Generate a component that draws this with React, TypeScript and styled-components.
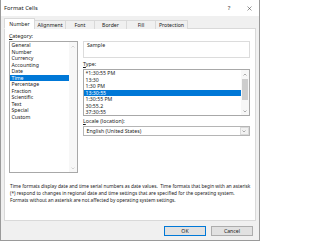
import styled, { createGlobalStyle } from "styled-components";

const GlobalStyle = createGlobalStyle`
  html, body {
    margin: 0;
    padding: 0;
    background: #ffffff;
  }
  body {
    font-family: "Noto Sans", "Liberation Sans", sans-serif;
  }
`;

const categories = [
  "General",
  "Number",
  "Currency",
  "Accounting",
  "Date",
  "Time",
  "Percentage",
  "Fraction",
  "Scientific",
  "Text",
  "Special",
  "Custom",
];

const types = [
  "*1:30:55 PM",
  "13:30",
  "1:30 PM",
  "13:30:55",
  "1:30:55 PM",
  "30:55.2",
  "37:30:55",
];

const tabs = ["Number", "Alignment", "Font", "Border", "Fill", "Protection"];
const tabWidths = [31, 32, 30, 33, 30, 33];

const Window = styled.div`
  width: 260px;
  height: 241px;
  box-sizing: border-box;
  border: 1px solid #9a9a9a;
  border-top: none;
  background: #f0f0f0;
  display: flex;
  flex-direction: column;
  font-size: 5.4px;
  color: #1a1a1a;
  overflow: hidden;
`;

const TitleBar = styled.div`
  height: 16px;
  flex: none;
  background: #ffffff;
  display: flex;
  align-items: center;
  padding-left: 3px;
`;

const Title = styled.span`
  font-size: 5.8px;
  flex: 1;
`;

const TitleButton = styled.div`
  width: 20px;
  height: 16px;
  display: flex;
  align-items: center;
  justify-content: center;
  font-size: 6px;
  color: #333;
`;

const Body = styled.div`
  flex: 1;
  display: flex;
  flex-direction: column;
  padding: 2px 3px 0 3px;
`;

const TabRow = styled.div`
  height: 11px;
  display: flex;
  align-items: flex-end;
  position: relative;
  z-index: 1;
  margin-bottom: -1px;
`;

const Tab = styled.div<{ $active?: boolean; $w: number }>`
  box-sizing: border-box;
  width: ${(p) => p.$w}px;
  height: ${(p) => (p.$active ? 11 : 9)}px;
  margin-left: -1px;
  border: 1px solid #d9d9d9;
  border-bottom: ${(p) => (p.$active ? "1px solid #ffffff" : "none")};
  background: ${(p) => (p.$active ? "#ffffff" : "#f0f0f0")};
  display: flex;
  align-items: center;
  justify-content: center;
  font-size: 5.2px;
  &:first-child {
    margin-left: 0;
  }
`;

const Panel = styled.div`
  box-sizing: border-box;
  width: 252px;
  height: 193px;
  background: #ffffff;
  border: 1px solid #d9d9d9;
  padding: 3px 4px 0 4px;
  display: flex;
  flex-direction: column;
`;

const TopRow = styled.div`
  display: flex;
  gap: 5px;
`;

const LeftColumn = styled.div`
  width: 69px;
  display: flex;
  flex-direction: column;
`;

const RightColumn = styled.div`
  width: 167px;
  display: flex;
  flex-direction: column;
`;

const Label = styled.div<{ $mt?: number }>`
  height: 9px;
  line-height: 9px;
  margin-top: ${(p) => p.$mt ?? 0}px;
  font-size: 5.3px;
  white-space: nowrap;
  & u {
    text-decoration-thickness: 0.5px;
  }
`;

const ListBox = styled.div<{ $h: number }>`
  box-sizing: border-box;
  height: ${(p) => p.$h}px;
  border: 1px solid #a8a8a8;
  background: #ffffff;
  display: flex;
`;

const Items = styled.div`
  flex: 1;
  overflow: hidden;
`;

const Item = styled.div<{ $selected?: boolean }>`
  height: 6.5px;
  line-height: 6.5px;
  padding-left: 1.5px;
  font-size: 5.2px;
  white-space: nowrap;
  background: ${(p) => (p.$selected ? "#0078d7" : "transparent")};
  color: ${(p) => (p.$selected ? "#ffffff" : "#1a1a1a")};
`;

const ScrollBar = styled.div`
  width: 8px;
  background: #f7f7f7;
  display: flex;
  flex-direction: column;
  align-items: center;
`;

const ScrollArrow = styled.div`
  height: 8px;
  width: 8px;
  display: flex;
  align-items: center;
  justify-content: center;
`;

const ScrollTrack = styled.div`
  flex: 1;
  width: 100%;
  display: flex;
  flex-direction: column;
`;

const Thumb = styled.div<{ $top: number; $h: number }>`
  margin: ${(p) => p.$top}px 1px 0 1px;
  height: ${(p) => p.$h}px;
  background: #cdcdcd;
`;

const SampleBox = styled.div`
  box-sizing: border-box;
  margin-top: 9px;
  height: 17px;
  border: 1px solid #dcdcdc;
  padding: 0 3px;
  line-height: 6px;
  font-size: 5.2px;
`;

const Select = styled.div`
  box-sizing: border-box;
  height: 10px;
  border: 1px solid #b5b5b5;
  display: flex;
  align-items: center;
  padding-left: 2.5px;
  font-size: 5.2px;
`;

const SelectText = styled.span`
  flex: 1;
`;

const SelectButton = styled.div`
  box-sizing: border-box;
  width: 9px;
  height: 8px;
  margin-right: 0.5px;
  border: 1px solid #dadada;
  background: #f2f2f2;
  display: flex;
  align-items: center;
  justify-content: center;
`;

const Description = styled.div`
  margin-top: 9.5px;
  padding-left: 1px;
  font-size: 4.75px;
  line-height: 7.2px;
  white-space: nowrap;
`;

const Footer = styled.div`
  display: flex;
  justify-content: flex-end;
  gap: 5px;
  padding: 5px 3px 0 0;
`;

const Button = styled.div<{ $default?: boolean }>`
  box-sizing: border-box;
  width: 42px;
  height: 10px;
  background: #e1e1e1;
  border: 1px solid ${(p) => (p.$default ? "#0078d7" : "#adadad")};
  display: flex;
  align-items: center;
  justify-content: center;
  font-size: 5.2px;
`;

const Chevron = ({ up, color = "#606060" }: { up?: boolean; color?: string }) => (
  <svg width="4" height="3" viewBox="0 0 8 5">
    <path
      d={up ? "M1 4.5 L4 1.5 L7 4.5" : "M1 0.5 L4 3.5 L7 0.5"}
      fill="none"
      stroke={color}
      strokeWidth="1"
    />
  </svg>
);

const CloseIcon = () => (
  <svg width="5" height="5" viewBox="0 0 10 10">
    <path d="M1 1 L9 9 M9 1 L1 9" stroke="#333" strokeWidth="1" fill="none" />
  </svg>
);

const App = () => {
  return (
    <>
      <GlobalStyle />
      <Window>
        <TitleBar>
          <Title>Format Cells</Title>
          <TitleButton>?</TitleButton>
          <TitleButton>
            <CloseIcon />
          </TitleButton>
        </TitleBar>
        <Body>
          <TabRow>
            {tabs.map((t, i) => (
              <Tab key={t} $active={i === 0} $w={tabWidths[i]}>
                {t}
              </Tab>
            ))}
          </TabRow>
          <Panel>
            <TopRow>
              <LeftColumn>
                <Label>
                  <u>C</u>ategory:
                </Label>
                <ListBox $h={132}>
                  <Items>
                    {categories.map((c) => (
                      <Item key={c} $selected={c === "Time"}>
                        {c}
                      </Item>
                    ))}
                  </Items>
                  <ScrollBar>
                    <ScrollArrow>
                      <Chevron up color="#b0b0b0" />
                    </ScrollArrow>
                    <ScrollTrack />
                    <ScrollArrow>
                      <Chevron color="#b0b0b0" />
                    </ScrollArrow>
                  </ScrollBar>
                </ListBox>
              </LeftColumn>
              <RightColumn>
                <SampleBox>Sample</SampleBox>
                <Label $mt={2}>
                  <u>T</u>ype:
                </Label>
                <ListBox $h={47}>
                  <Items>
                    {types.map((t) => (
                      <Item key={t} $selected={t === "13:30:55"}>
                        {t}
                      </Item>
                    ))}
                  </Items>
                  <ScrollBar>
                    <ScrollArrow>
                      <Chevron up />
                    </ScrollArrow>
                    <ScrollTrack>
                      <Thumb $top={1} $h={21} />
                    </ScrollTrack>
                    <ScrollArrow>
                      <Chevron />
                    </ScrollArrow>
                  </ScrollBar>
                </ListBox>
                <Label $mt={1}>
                  <u>L</u>ocale (location):
                </Label>
                <Select>
                  <SelectText>English (United States)</SelectText>
                  <SelectButton>
                    <Chevron />
                  </SelectButton>
                </Select>
              </RightColumn>
            </TopRow>
            <Description>
              <div>
                Time formats display date and time serial numbers as date values.&nbsp; Time formats that begin with an asterisk
              </div>
              <div>
                (*) respond to changes in regional date and time settings that are specified for the operating system.
              </div>
              <div>Formats without an asterisk are not affected by operating system settings.</div>
            </Description>
          </Panel>
          <Footer>
            <Button $default>OK</Button>
            <Button>Cancel</Button>
          </Footer>
        </Body>
      </Window>
    </>
  );
};

export default App;
